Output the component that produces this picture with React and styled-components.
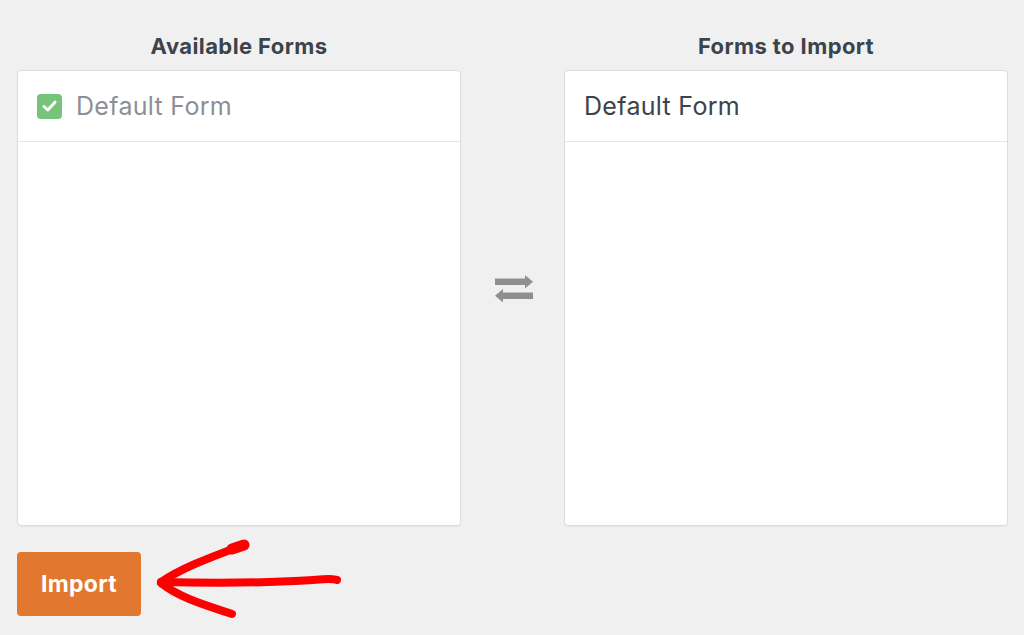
import React from 'react'
import styled, { createGlobalStyle } from 'styled-components'

const GlobalStyle = createGlobalStyle`
  html, body {
    margin: 0;
    padding: 0;
    background: #f0f0f1;
    font-family: Inter, "Liberation Sans", sans-serif;
  }
`

const Page = styled.div`
  width: 1024px;
  height: 635px;
  box-sizing: border-box;
  padding: 0 16px 0 17px;
  overflow: hidden;
`

const Columns = styled.div`
  display: grid;
  grid-template-columns: 444px 1fr 444px;
`

const Column = styled.div`
  display: flex;
  flex-direction: column;
`

const Heading = styled.h3`
  margin: 0;
  padding-top: 34px;
  margin-bottom: 12px;
  height: 24px;
  line-height: 24px;
  text-align: center;
  font-size: 22px;
  letter-spacing: 0.4px;
  font-weight: 700;
  color: #3c434a;
`

const Panel = styled.div`
  height: 456px;
  box-sizing: border-box;
  background: #fff;
  border: 1px solid #dcdcde;
  border-radius: 4px;
  box-shadow: 0 1px 1px rgba(0, 0, 0, 0.04);
`

const Row = styled.div`
  display: flex;
  align-items: center;
  gap: 14px;
  height: 70px;
  padding: 0 18px 0 19px;
  border-bottom: 1px solid #e6e6e8;
  font-size: 25px;
  letter-spacing: 0.3px;
  color: ${(props) => (props.muted ? '#8c8f94' : '#3c434a')};
`

const Check = styled.span`
  width: 25px;
  height: 25px;
  border-radius: 4px;
  background: #76c37a;
  display: flex;
  align-items: center;
  justify-content: center;
  flex-shrink: 0;
`

const Middle = styled.div`
  display: flex;
  align-items: center;
  justify-content: center;
  padding-top: 70px;
  padding-bottom: 18px;
  padding-left: 3px;
`

const Footer = styled.div`
  display: flex;
  align-items: flex-start;
  gap: 9px;
  margin-top: 26px;
`

const ImportButton = styled.button`
  width: 124px;
  height: 64px;
  border: none;
  border-radius: 4px;
  background: #e27730;
  color: #fff;
  font-family: inherit;
  font-size: 23px;
  letter-spacing: 0.3px;
  font-weight: 700;
  cursor: pointer;
`

const ArrowWrap = styled.div`
  margin-top: -13px;
  line-height: 0;
`

const CheckMark = () => (
  <svg width="15" height="12" viewBox="0 0 15 12">
    <path d="M2 6.5 L5.8 10 L13 2.2" fill="none" stroke="#fff" strokeWidth="3" strokeLinecap="round" strokeLinejoin="round" />
  </svg>
)

const SwapIcon = () => (
  <svg width="38" height="28" viewBox="0 0 38 28" fill="#8f8f8f">
    <rect x="0" y="3.5" width="31" height="6.5" />
    <polygon points="30,0 38,6.75 30,13.5" />
    <rect x="7" y="17.5" width="31" height="6.5" />
    <polygon points="8,14 0,20.75 8,27.5" />
  </svg>
)

const Annotation = () => (
  <svg width="200" height="90" viewBox="150 539 200 90" fill="none" stroke="#ff0000" strokeLinecap="round" strokeLinejoin="round">
    <path d="M161 582 C 200 583, 255 583, 295 581 S 328 578, 337 580" strokeWidth="8" />
    <path d="M243 545 C 215 556, 185 566, 161 582" strokeWidth="8" />
    <path d="M232 549 L 244 545" strokeWidth="11" />
    <path d="M161 583 C 180 598, 205 605, 232 614" strokeWidth="8" />
  </svg>
)

export default function App() {
  return (
    <>
      <GlobalStyle />
      <Page>
        <Columns>
          <Column>
            <Heading>Available Forms</Heading>
            <Panel>
              <Row muted>
                <Check><CheckMark /></Check>
                Default Form
              </Row>
            </Panel>
          </Column>
          <Middle>
            <SwapIcon />
          </Middle>
          <Column>
            <Heading>Forms to Import</Heading>
            <Panel>
              <Row>Default Form</Row>
            </Panel>
          </Column>
        </Columns>
        <Footer>
          <ImportButton>Import</ImportButton>
          <ArrowWrap>
            <Annotation />
          </ArrowWrap>
        </Footer>
      </Page>
    </>
  )
}
